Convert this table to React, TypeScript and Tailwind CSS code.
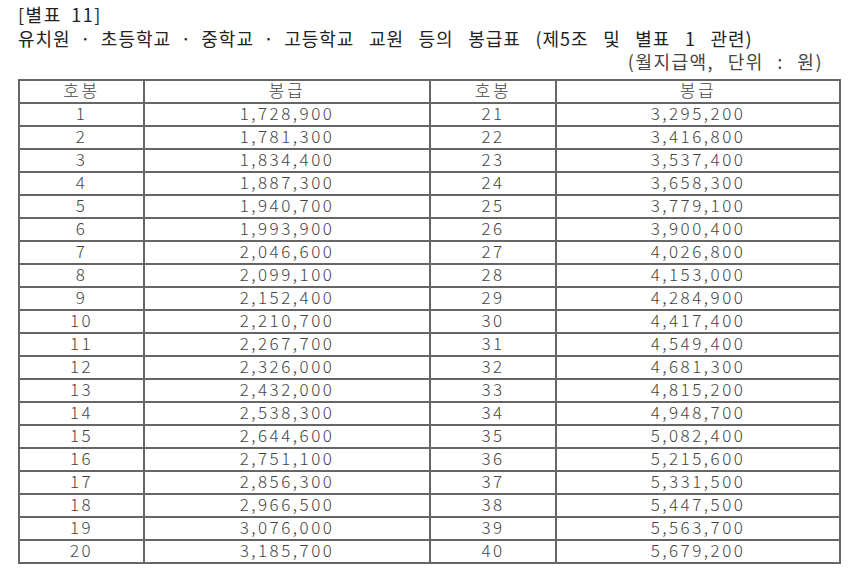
import React from 'react';

const left: [number, string][] = [
  [1, '1,728,900'], [2, '1,781,300'], [3, '1,834,400'], [4, '1,887,300'], [5, '1,940,700'],
  [6, '1,993,900'], [7, '2,046,600'], [8, '2,099,100'], [9, '2,152,400'], [10, '2,210,700'],
  [11, '2,267,700'], [12, '2,326,000'], [13, '2,432,000'], [14, '2,538,300'], [15, '2,644,600'],
  [16, '2,751,100'], [17, '2,856,300'], [18, '2,966,500'], [19, '3,076,000'], [20, '3,185,700'],
];

const right: [number, string][] = [
  [21, '3,295,200'], [22, '3,416,800'], [23, '3,537,400'], [24, '3,658,300'], [25, '3,779,100'],
  [26, '3,900,400'], [27, '4,026,800'], [28, '4,153,000'], [29, '4,284,900'], [30, '4,417,400'],
  [31, '4,549,400'], [32, '4,681,300'], [33, '4,815,200'], [34, '4,948,700'], [35, '5,082,400'],
  [36, '5,215,600'], [37, '5,331,500'], [38, '5,447,500'], [39, '5,563,700'], [40, '5,679,200'],
];

const font = { fontFamily: '"Noto Sans CJK KR", "Noto Sans", sans-serif' };

const cell = 'border-2 border-[#666] text-center p-0 pb-[3px] leading-[18px] font-light';

// middle dot separator, tighter than ordinary word gaps
const Dot = () => <span className="[word-spacing:4.5px]"> · </span>;

const App: React.FC = () => {
  return (
    <div className="w-[853px] h-[585px] bg-white text-[#333] pl-[18px] pr-[14px] pt-[2px]" style={font}>
      <div className="text-[18px] leading-[24px] tracking-[1.5px] [word-spacing:4px] text-[#222]">[별표 11]</div>
      <div className="text-[18px] leading-[24px] tracking-[1px] [word-spacing:9.5px] whitespace-nowrap text-[#222]">
        유치원<Dot />초등학교<Dot />중학교<Dot />고등학교 교원 등의 봉급표 (제5조 및 별표 1 관련)
      </div>
      <div className="text-[18px] leading-[22px] tracking-[1.5px] [word-spacing:8px] text-right pr-[16px] text-[#444]">
        (월지급액, 단위 : 원)
      </div>

      {/* Salary table */}
      <table className="mt-[7px] border-collapse border-2 border-[#666] w-[821px] table-fixed text-[17px] tracking-[2.5px] text-[#444]">
        <colgroup>
          <col className="w-[125px]" />
          <col className="w-[286px]" />
          <col className="w-[126px]" />
          <col className="w-[284px]" />
        </colgroup>
        <thead>
          <tr className="h-[23px]">
            <th className={cell}>호봉</th>
            <th className={cell}>봉급</th>
            <th className={cell}>호봉</th>
            <th className={cell}>봉급</th>
          </tr>
        </thead>
        <tbody>
          {left.map((row, i) => (
            <tr key={row[0]} className="h-[23px]">
              <td className={cell}>{row[0]}</td>
              <td className={cell}>{row[1]}</td>
              <td className={cell}>{right[i][0]}</td>
              <td className={cell}>{right[i][1]}</td>
            </tr>
          ))}
        </tbody>
      </table>
    </div>
  );
};

export default App;
